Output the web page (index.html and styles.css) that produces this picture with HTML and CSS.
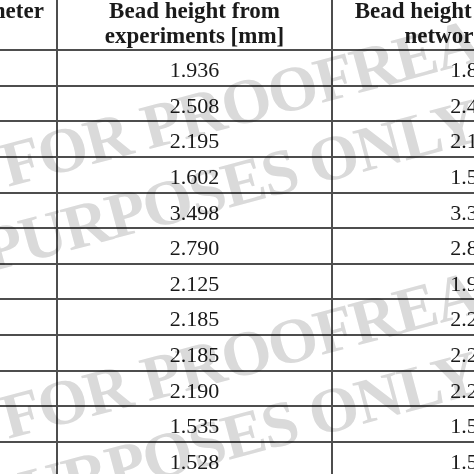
FILE: index.html
```html
<!DOCTYPE html>
<html>
<head>
<meta charset="utf-8">
<link rel="stylesheet" href="styles.css">
</head>
<body>
<div class="sheet">
  <table class="data">
    <colgroup>
      <col class="c-param">
      <col class="c-exp">
      <col class="c-net">
    </colgroup>
    <thead>
      <tr>
        <th>Parameter</th>
        <th>Bead height from<br>experiments [mm]</th>
        <th>Bead height from neural<br>network [mm]</th>
      </tr>
    </thead>
    <tbody>
      <tr><td></td><td>1.936</td><td>1.852</td></tr>
      <tr><td></td><td>2.508</td><td>2.471</td></tr>
      <tr><td></td><td>2.195</td><td>2.153</td></tr>
      <tr><td></td><td>1.602</td><td>1.548</td></tr>
      <tr><td></td><td>3.498</td><td>3.362</td></tr>
      <tr><td></td><td>2.790</td><td>2.815</td></tr>
      <tr><td></td><td>2.125</td><td>1.987</td></tr>
      <tr><td></td><td>2.185</td><td>2.236</td></tr>
      <tr><td></td><td>2.185</td><td>2.241</td></tr>
      <tr><td></td><td>2.190</td><td>2.229</td></tr>
      <tr><td></td><td>1.535</td><td>1.562</td></tr>
      <tr><td></td><td>1.528</td><td>1.549</td></tr>
    </tbody>
  </table>
  <svg class="watermark" width="474" height="474" viewBox="0 0 474 474">
    <g class="wm-text">
      <text x="8" y="187" transform="rotate(-15 8 187)">FOR PROOFREADING</text>
      <text x="-10" y="272" transform="rotate(-15 -10 272)">PURPOSES ONLY</text>
      <text x="8" y="439" transform="rotate(-15 8 439)">FOR PROOFREADING</text>
      <text x="-10" y="524" transform="rotate(-15 -10 524)">PURPOSES ONLY</text>
    </g>
  </svg>
</div>
</body>
</html>
```

FILE: styles.css
```css
html, body {
  margin: 0;
  padding: 0;
  background: #ffffff;
}

.sheet {
  position: relative;
  width: 474px;
  height: 474px;
  overflow: hidden;
  background: #ffffff;
}

.data {
  border-collapse: collapse;
  table-layout: fixed;
  width: 692px;
  margin-left: -75px;
  margin-top: -2px;
  font-family: "Liberation Serif", "Times New Roman", serif;
  color: #1a1a1a;
}

.c-param { width: 131px; }
.c-exp { width: 275px; }
.c-net { width: 286px; }

.data th,
.data td {
  border: 2px solid #4e4e4e;
  text-align: center;
  padding: 0;
}

.data th {
  border-top: none;
  font-weight: bold;
  font-size: 23px;
  line-height: 25px;
  vertical-align: top;
  padding-bottom: 1px;
  white-space: nowrap;
}

.data td {
  font-size: 22px;
  line-height: 25px;
  height: 35.65px;
  box-sizing: border-box;
  vertical-align: top;
  padding-top: 6px;
  white-space: nowrap;
}

.watermark {
  position: absolute;
  left: 0;
  top: 0;
  pointer-events: none;
  mix-blend-mode: multiply;
}

.wm-text {
  font-family: "Liberation Serif", "Times New Roman", serif;
  font-weight: bold;
  font-size: 64px;
  letter-spacing: -1.5px;
  fill: #dadada;
}
```
